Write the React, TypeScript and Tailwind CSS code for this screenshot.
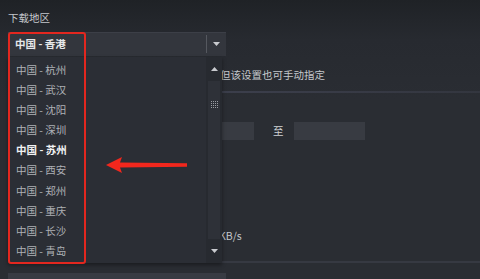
import React from "react";

const cities = ["杭州", "武汉", "沈阳", "深圳", "苏州", "西安", "郑州", "重庆", "长沙", "青岛"];

export default function App() {
  const font = { fontFamily: '"Noto Sans CJK SC", "Noto Sans", "Liberation Sans", sans-serif' };
  return (
    <div
      className="relative w-[480px] h-[279px] overflow-hidden bg-[linear-gradient(to_bottom,#1f2226_0px,#272a30_40px,#2a2d33_100px)] text-[10.5px]"
      style={font}
    >
      {/* underlying page */}
      <div className="flex flex-col pt-[10px] pb-[4px] pl-[8px]">
        <div className="h-[16px] leading-[16px] text-[#c4c7cc]">下载地区</div>
        <div className="mt-[6px] w-[218px] h-[24px] bg-[#33363d] flex items-center shadow-[0_1px_0_#3c3f47_inset]">
          <span className="pl-[7px] flex-1 font-bold text-[#e6e8ea]">中国 - 香港</span>
          <div className="w-[1px] h-[18px] bg-[#55585f]" />
          <div className="w-[19px] flex justify-center">
            <svg width="7" height="4" viewBox="0 0 7 4"><path d="M0 0h7L3.5 4z" fill="#c9cbcf" /></svg>
          </div>
        </div>
      </div>
      <div className="flex flex-col pl-[212px]">
        <div className="mt-[7px] h-[16px] leading-[16px] pl-[8px] text-[#c4c7cc] whitespace-nowrap">但该设置也可手动指定</div>
        <div className="mt-[8px] -ml-[204px] h-[2px] bg-gradient-to-r from-[#363944] via-[#3b3e4b] to-[#33363f]" />
        <div className="mt-[29px] flex items-center h-[18px]">
          <div className="w-[42px] h-[18px] bg-[#383b42]" />
          <span className="ml-[19px] text-[#d0d2d5]">至</span>
          <div className="ml-[10px] w-[71px] h-[18px] bg-[#383b42]" />
        </div>
        <div className="mt-[88px] h-[16px] leading-[16px] pl-[7px] text-[#c4c7cc]">KB/s</div>
        <div className="mt-[17px] -ml-[204px] h-[2px] bg-[#363942]" />
        <div className="mt-[10px] -ml-[204px] w-[218px] h-[10px] bg-[#383b43]" />
      </div>

      {/* dropdown list overlay */}
      <div className="absolute left-[8px] top-[57px] w-[214px] h-[206px] bg-[#2b2e35] flex shadow-[0_2px_4px_rgba(0,0,0,0.4)]">
        <div className="flex-1 flex flex-col pt-[3px] pl-[8px]">
          {cities.map((c) => (
            <div
              key={c}
              className={
                c === "苏州"
                  ? "h-[20.1px] leading-[20px] font-bold text-[#f2f3f4]"
                  : "h-[20.1px] leading-[20px] text-[#aeb1b6]"
              }
            >
              中国 - {c}
            </div>
          ))}
        </div>
        <div className="w-[16px] flex flex-col items-center bg-[#272a30]">
          <div className="h-[24px] flex items-center justify-center">
            <svg width="7" height="4" viewBox="0 0 7 4"><path d="M0 4h7L3.5 0z" fill="#c9cbcf" /></svg>
          </div>
          <div className="w-[12px] flex-1 bg-[#2e3138] flex flex-col items-center">
            <svg className="mt-[20px]" width="7" height="7" viewBox="0 0 7 7">
              {[0, 2, 4, 6].map((y) =>
                [0, 2, 4, 6].map((x) => <rect key={`${x}-${y}`} x={x} y={y} width="1" height="1" fill="#9a9da3" />)
              )}
            </svg>
          </div>
          <div className="h-[24px] flex items-center justify-center">
            <svg width="7" height="4" viewBox="0 0 7 4"><path d="M0 0h7L3.5 4z" fill="#c9cbcf" /></svg>
          </div>
        </div>
      </div>

      {/* red highlight rectangle */}
      <div className="absolute left-[8px] top-[32px] w-[78px] h-[232px] border-2 border-[#e3271f] rounded-[3px]" />

      {/* red arrow */}
      <svg className="absolute left-[104px] top-[154px]" width="86" height="22" viewBox="0 0 86 22">
        <polygon points="2,11 18,3 16,8.5 83,9.3 83,12.7 16,13.5 18,19" fill="#f2271d" />
      </svg>
    </div>
  );
}
